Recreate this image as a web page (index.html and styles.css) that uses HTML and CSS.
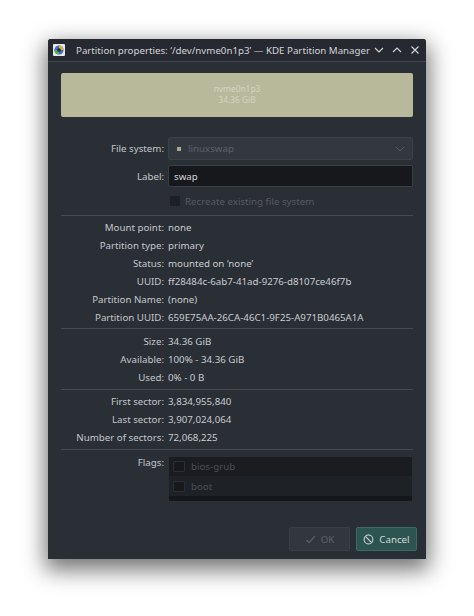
FILE: index.html
```html
<!DOCTYPE html>
<html lang="en">
<head>
<meta charset="utf-8">
<title>Partition properties</title>
<link rel="stylesheet" href="styles.css">
</head>
<body>
<div class="window">
  <header class="titlebar">
    <svg class="app-icon" viewBox="0 0 12 12" width="12" height="12">
      <rect width="12" height="12" rx="1" fill="#e8e8ee"/>
      <circle cx="6" cy="6" r="4.6" fill="#3f6fc4"/>
      <path d="M6 1.4A4.6 4.6 0 0 1 10.6 6H6z" fill="#d9b23c"/>
      <path d="M1.4 6A4.6 4.6 0 0 0 6 10.6V6z" fill="#5aa85a"/>
      <circle cx="6" cy="6" r="1.8" fill="#23272e"/>
    </svg>
    <div class="title">Partition properties: ‘/dev/nvme0n1p3’ — KDE Partition Manager</div>
    <div class="controls">
      <svg viewBox="0 0 10 10" width="10" height="10"><path d="M1 3l4 4 4-4" class="glyph"/></svg>
      <svg viewBox="0 0 10 10" width="10" height="10"><path d="M1 7l4-4 4 4" class="glyph"/></svg>
      <svg viewBox="0 0 10 10" width="10" height="10"><path d="M1.5 1.5l7 7M8.5 1.5l-7 7" class="glyph"/></svg>
    </div>
  </header>
  <main class="content">
    <div class="partition-bar"><span>nvme0n1p3</span><span>34.36 GiB</span></div>

    <section class="form">
      <div class="row row-combo">
        <label class="key">File system:</label>
        <div class="combo">
          <span class="swatch"></span><span class="combo-text">linuxswap</span>
          <svg class="combo-arrow" viewBox="0 0 10 10" width="10" height="10"><path d="M1 3l4 4 4-4"/></svg>
        </div>
      </div>
      <div class="row row-input">
        <label class="key">Label:</label>
        <div class="input">swap</div>
      </div>
      <div class="row row-check">
        <span class="key"></span>
        <div class="check-wrap"><span class="check"></span><span class="check-text">Recreate existing file system</span></div>
      </div>
    </section>

    <hr class="sep sep-a">
    <section class="info info-a">
      <div class="row"><span class="key">Mount point:</span><span class="val">none</span></div>
      <div class="row"><span class="key">Partition type:</span><span class="val">primary</span></div>
      <div class="row"><span class="key">Status:</span><span class="val">mounted on ‘none’</span></div>
      <div class="row"><span class="key">UUID:</span><span class="val">ff28484c-6ab7-41ad-9276-d8107ce46f7b</span></div>
      <div class="row"><span class="key">Partition Name:</span><span class="val">(none)</span></div>
      <div class="row"><span class="key">Partition UUID:</span><span class="val">659E75AA-26CA-46C1-9F25-A971B0465A1A</span></div>
    </section>
    <hr class="sep">
    <section class="info info-b">
      <div class="row"><span class="key">Size:</span><span class="val">34.36 GiB</span></div>
      <div class="row"><span class="key">Available:</span><span class="val">100% - 34.36 GiB</span></div>
      <div class="row"><span class="key">Used:</span><span class="val">0% - 0 B</span></div>
    </section>
    <hr class="sep">
    <section class="info info-c">
      <div class="row"><span class="key">First sector:</span><span class="val">3,834,955,840</span></div>
      <div class="row"><span class="key">Last sector:</span><span class="val">3,907,024,064</span></div>
      <div class="row"><span class="key">Number of sectors:</span><span class="val">72,068,225</span></div>
    </section>
    <hr class="sep">
    <section class="flags-row">
      <span class="key">Flags:</span>
      <div class="flags">
        <div class="flag flag-a"><span class="flag-box"></span><span>bios-grub</span></div>
        <div class="flag flag-b"><span class="flag-box"></span><span>boot</span></div>
      </div>
    </section>
  </main>
  <footer class="buttons">
    <div class="btn btn-ok">
      <svg viewBox="0 0 12 12" width="11" height="11"><path d="M1.5 6.5l3 3 6-7" class="ok-glyph"/></svg>
      <span>OK</span>
    </div>
    <div class="btn btn-cancel">
      <svg viewBox="0 0 12 12" width="11" height="11"><circle cx="6" cy="6" r="4.8" class="cancel-glyph"/><path d="M2.6 2.6l6.8 6.8" class="cancel-glyph"/></svg>
      <span>Cancel</span>
    </div>
  </footer>
</div>
</body>
</html>
```
FILE: styles.css
```css
* { box-sizing: border-box; }
html, body { margin: 0; height: 100%; }
body {
  background: #fff;
  padding: 39px 48px 0;
  font-family: "Noto Sans", sans-serif;
  font-size: 9.72px;
  overflow: hidden;
}
.window {
  width: 378px;
  height: 520px;
  background: #2a2e35;
  border-radius: 3px 3px 0 0;
  box-shadow: 0 8px 22px 3px rgba(0, 0, 0, .55);
  color: #c9ccd0;
  display: flex;
  flex-direction: column;
}
.titlebar {
  height: 23px;
  flex: none;
  background: #262a30;
  border-bottom: 1px solid #42474e;
  border-radius: 3px 3px 0 0;
  display: flex;
  align-items: center;
  padding: 0 6px 0 5px;
}
.app-icon { flex: none; }
.title { margin-left: 11px; flex: 1; min-width: 0; white-space: nowrap; color: #d2d4d8; }
.controls { display: flex; gap: 8px; flex: none; }
.glyph { fill: none; stroke: #d4d6da; stroke-width: 1.1; }
.content { flex: 1; padding: 11px 13px 0; }
.partition-bar {
  height: 44px;
  background: #b8b99a;
  border-radius: 2px;
  padding-bottom: 2px;
  display: flex;
  flex-direction: column;
  align-items: center;
  justify-content: center;
  font-size: 8.4px;
  line-height: 11.5px;
  color: #d4d5bf;
}
.form { margin-top: 20px; }
.row { display: flex; align-items: center; height: 18px; }
.key { width: 103px; flex: none; text-align: right; color: #c4c7cb; }
.val { margin-left: 4px; white-space: nowrap; color: #c9ccd0; }
.row-combo { height: 23px; }
.combo {
  margin-left: 4px;
  width: 245px;
  height: 23px;
  background: #33383f;
  border: 1px solid #3b4047;
  border-radius: 2px;
  display: flex;
  align-items: center;
  padding: 0 7px 0 8px;
  color: #5c6168;
}
.swatch { width: 4px; height: 4px; background: #a9aa94; flex: none; }
.combo-text { margin-left: 7px; flex: 1; }
.combo-arrow path { fill: none; stroke: #565b62; stroke-width: 1; }
.row-input { height: 22px; margin-top: 5px; }
.input {
  margin-left: 4px;
  width: 245px;
  height: 22px;
  background: #16181c;
  border: 1px solid #3a3f45;
  border-radius: 2px;
  display: flex;
  align-items: center;
  padding: 0 5px;
  color: #d4d6da;
}
.row-check { margin-top: 5px; }
.check-wrap { margin-left: 6px; display: flex; align-items: center; }
.check { width: 10px; height: 10px; background: #1d2025; flex: none; }
.check-text { margin-left: 5px; color: #565b62; }
.sep { border: 0; height: 1px; background: #454a50; margin: 0; }
.sep-a { margin-top: 5px; }
.info-a { padding: 2px 0; }
.info-b { padding: 3px 0 3px; }
.info-c { padding: 2px 0 3px; }
.flags-row { display: flex; padding-top: 7px; }
.flags-row .key { line-height: 11px; }
.flags {
  margin-left: 5px;
  width: 243px;
  height: 44px;
  background: #15171b;
  border-radius: 1px;
  color: #4c5056;
}
.flag { height: 19px; display: flex; align-items: center; padding-left: 4px; }
.flag-a { background: #1a1c20; }
.flag-b { background: #1e2125; height: 20px; }
.flag-box { width: 12px; height: 11px; background: #17191d; border: 1px solid #2b2e33; border-radius: 1px; margin-right: 6px; flex: none; }
.buttons {
  flex: none;
  display: flex;
  justify-content: flex-end;
  gap: 6px;
  padding: 0 9px 8px 0;
}
.btn {
  width: 61px;
  height: 24px;
  border-radius: 2px;
  display: flex;
  align-items: center;
  justify-content: center;
  gap: 5px;
}
.btn-ok { background: #32363d; border: 1px solid #3a3e45; color: #5e636a; }
.btn-cancel { background: #2c5451; border: 1px solid #3a6a66; color: #d4d8d8; }
.ok-glyph { fill: none; stroke: #5e636a; stroke-width: 1.3; }
.cancel-glyph { fill: none; stroke: #d4d8d8; stroke-width: 1.1; }
```
